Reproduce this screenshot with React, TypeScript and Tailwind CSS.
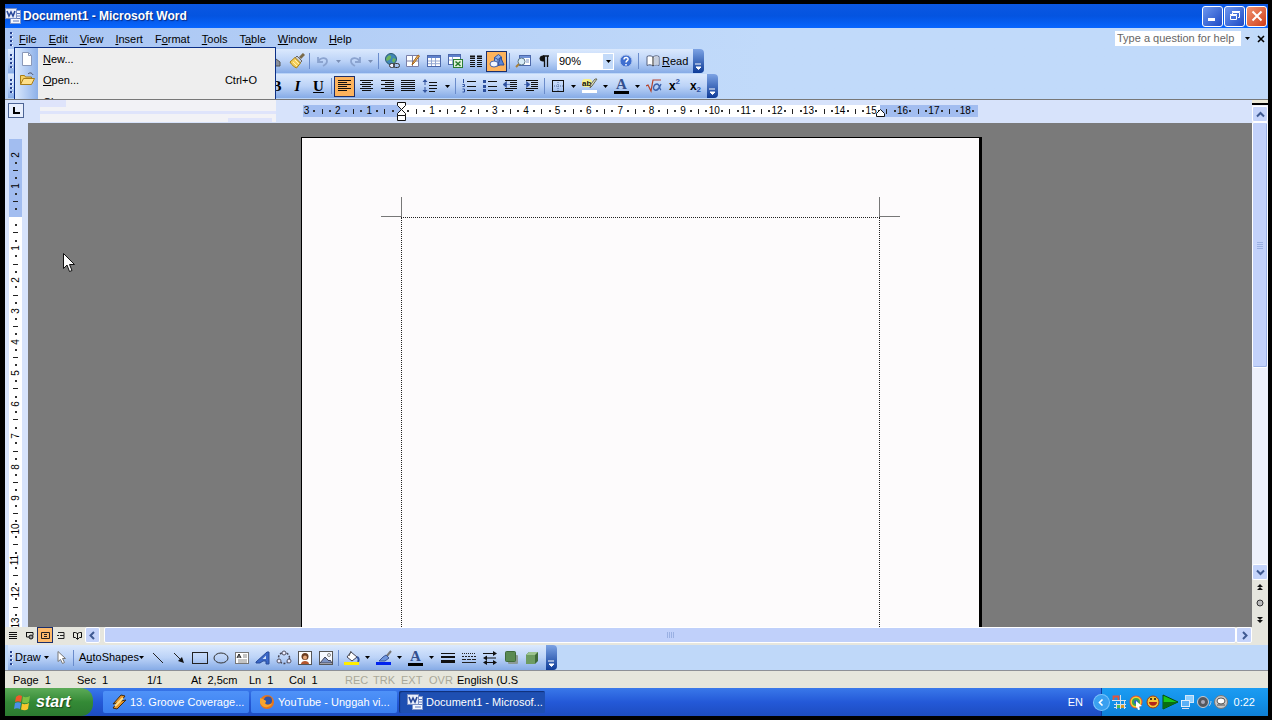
import React from "react";

type Kids = { children?: React.ReactNode };

function Btn({ label, children, active = false, cls = "w-[21px]" }: Kids & { label: string; active?: boolean; cls?: string }) {
  return (
    <button
      type="button"
      aria-label={label}
      className={`${cls} flex h-[21px] shrink-0 items-center justify-center ${active ? "border border-[#1c2f6b] bg-[#fdb35c]" : ""}`}
    >
      {children}
    </button>
  );
}

function Ic({ children }: Kids) {
  return (
    <svg width="16" height="16" viewBox="0 0 16 16" fill="none" aria-hidden="true" className="shrink-0">
      {children}
    </svg>
  );
}

function Caret({ label, dim = false }: { label: string; dim?: boolean }) {
  return (
    <Btn label={label} cls="w-[11px]">
      <svg width="5" height="3" viewBox="0 0 5 3" aria-hidden="true"><path d="M0 0h5L2.500 3z" fill={dim ? "#7b8fb5" : "#000"} /></svg>
    </Btn>
  );
}

function Sep() {
  return <span className="flex w-[5px] shrink-0 justify-center"><span className="h-4 w-px bg-[#6a8ccb]" /></span>;
}

function Grip() {
  return (
    <svg width="4" height="14" viewBox="0 0 4 14" aria-hidden="true" className="shrink-0">
      {[0, 4, 8, 12].map((y) => (
        <g key={y}><rect x="1" y={y + 1} width="2" height="1" fill="#fff" /><rect x="0" y={y} width="2" height="2" fill="#27418f" /></g>
      ))}
    </svg>
  );
}

function Cap() {
  return (
    <button type="button" aria-label="Toolbar Options" className="ml-auto flex w-[11px] shrink-0 items-end justify-center self-stretch rounded-r bg-linear-to-b from-[#7da3e4] to-[#0d3b98] pb-[3px]">
      <svg width="7" height="7" viewBox="0 0 7 7" aria-hidden="true"><path d="M0 1h6M1 4h5L3.500 6.500z" stroke="#fff" fill="#fff" strokeWidth="1" /></svg>
    </button>
  );
}

function Lines({ rows, color = "#111" }: { rows: number[][]; color?: string }) {
  return <>{rows.map(([x, y, w], i) => <rect key={i} x={x} y={y} width={w} height="1" fill={color} />)}</>;
}

const bar = "flex items-center bg-linear-to-b from-[#dbe9fd] via-[#bcd3f7] to-[#86abe6] rounded-r";

function WordIcon() {
  return (
    <Ic>
      <rect x="5.500" y="2.500" width="10" height="13" fill="#f4f7ff" stroke="#8196c9" />
      <path d="M12 5.500h3M12 8h3M12 10.500h3M8 13h6" stroke="#5d77b8" />
      <rect x="0.500" y="0.500" width="11" height="10" fill="#e9eefb" stroke="#7a8fc4" />
      <path d="M2 3l2 5 2-4 2 4 2-5" stroke="#2b4a9a" strokeWidth="1.600" />
    </Ic>
  );
}

function TitleBar() {
  const box = "flex h-[21px] w-[21px] items-center justify-center rounded-[3px] border border-white";
  return (
    <header className="flex h-6 shrink-0 items-center bg-linear-to-b from-[#0b57e2] via-[#0454e0] to-[#0866ff] pr-px">
      <WordIcon />
      <h1 className="ml-[2px] flex-1 text-[12px] leading-4 font-bold text-white [text-shadow:1px_1px_1px_#0a2a80]">Document1 - Microsoft Word</h1>
      <div className="flex gap-px">
        <button type="button" aria-label="Minimize" className={`${box} bg-linear-to-br from-[#6d96ef] to-[#1d48c4]`}>
          <Ic><rect x="3" y="10" width="7" height="3" fill="#fff" /></Ic>
        </button>
        <button type="button" aria-label="Restore" className={`${box} bg-linear-to-br from-[#6d96ef] to-[#1d48c4]`}>
          <Ic><path d="M5.500 6V4.500h7v5H11M5 3.500h8" stroke="#fff" /><path d="M3.500 7.500h6v4h-6zM3 6.500h7" stroke="#fff" /></Ic>
        </button>
        <button type="button" aria-label="Close" className={`${box} bg-linear-to-br from-[#f0926f] to-[#cf3b12]`}>
          <Ic><path d="M3.500 3.500l9 9M12.500 3.500l-9 9" stroke="#fff" strokeWidth="2" /></Ic>
        </button>
      </div>
    </header>
  );
}

const menus: [string, string, string][] = [
  ["", "F", "ile"], ["", "E", "dit"], ["", "V", "iew"], ["", "I", "nsert"], ["F", "o", "rmat"],
  ["", "T", "ools"], ["T", "a", "ble"], ["", "W", "indow"], ["", "H", "elp"],
];

function FileMenu() {
  return (
    <div role="menu" className="absolute top-[19px] left-[9px] z-10 w-[262px] text-[11px]">
      <div className="flex h-[52px] overflow-hidden border border-b-0 border-[#0b2f86] bg-[#eeeeee]">
        <div className="flex w-[23px] shrink-0 flex-col items-center gap-1 bg-linear-to-r from-[#dbe9fd] to-[#8db0e8] pt-[3px]">
          <Ic><path d="M3.500 1.500h6l3 3v10h-9z" fill="#fff" stroke="#8a98b8" /><path d="M9.500 1.500v3h3" stroke="#8a98b8" /></Ic>
          <Ic>
            <path d="M1.500 13.500v-9h4l1 1.500h6v2" fill="#f3cf63" stroke="#a97d16" />
            <path d="M1.500 13.500l3-6h11l-3 6z" fill="#ffe08a" stroke="#a97d16" />
            <path d="M9 3c2-2 4-1 5 1" stroke="#445" />
          </Ic>
        </div>
        <div className="flex-1 pr-[18px] pl-[5px]">
          <button type="button" role="menuitem" className="flex h-[21px] w-full items-center"><span><u>N</u>ew...</span></button>
          <button type="button" role="menuitem" className="flex h-[21px] w-full items-center justify-between"><span><u>O</u>pen...</span><span>Ctrl+O</span></button>
          <button type="button" role="menuitem" className="flex h-[21px] w-full items-start pt-[4px]"><span><u>C</u>lose</span></button>
        </div>
      </div>
      <div className="ml-[26px] h-[23px] border-t border-[#777] bg-[#f2f2f6]">
        <div className="h-[7px] w-[26px] bg-[#dfe4fb]" />
        <div className="mt-1 h-[3px] bg-[#dfe4fb]" />
        <div className="mt-1 mr-1 ml-auto h-1 w-11 bg-[#dfe4fb]" />
      </div>
    </div>
  );
}

function MenuBar() {
  return (
    <nav className="relative flex h-[21px] shrink-0 items-center bg-[#bcd6f8] bg-linear-to-r from-[#a9c5f3] to-[#c1dafa] to-60% pl-[5px] text-[11px] leading-4">
      <Grip />
      <div className="ml-[5px] flex gap-3">
        {menus.map(([a, b, c]) => (
          <button type="button" key={a + b + c}>{a}<u>{b}</u>{c}</button>
        ))}
      </div>
      <div className="ml-auto flex h-[15px] w-[138px] items-center bg-white">
        <input aria-label="Type a question for help" placeholder="Type a question for help" className="w-[126px] min-w-0 pl-[2px] text-[11px] leading-[15px] placeholder:text-[#666]" />
        <button type="button" aria-label="Show questions" className="flex h-[15px] w-3 items-center justify-center bg-[#c3daf9]">
          <svg width="5" height="3" viewBox="0 0 5 3"><path d="M0 0h5L2.500 3z" fill="#000" /></svg>
        </button>
      </div>
      <button type="button" aria-label="Close document" className="mr-px ml-[2px] flex w-3 justify-center">
        <svg width="8" height="8" viewBox="0 0 8 8"><path d="M1 1l6 6M7 1L1 7" stroke="#000" strokeWidth="1.600" /></svg>
      </button>
      <FileMenu />
    </nav>
  );
}

function StandardBar() {
  return (
    <div role="toolbar" aria-label="Standard" className={`${bar} ml-[3px] h-6 w-[696px]`}>
      <div className="w-[257px] shrink-0 pl-[2px]"><Grip /></div>
      <Btn label="Research"><Ic><path d="M4 13V9l4-3 4 3v4z" fill="#8a8f9a" stroke="#555" /></Ic></Btn>
      <Btn label="Format Painter">
        <Ic><path d="M15 1l-4 4" stroke="#7a6a4a" strokeWidth="3" /><path d="M8 3l5 5-2 2-5-5z" fill="#c9ccd6" stroke="#666" /><path d="M6 4.500l5.500 5.500-4 5c-2-1-5-3-6.500-6z" fill="#f5cf5c" stroke="#a88118" /><path d="M4 9l4 4M6 7l4 4" stroke="#fff0b0" /></Ic>
      </Btn>
      <Sep />
      <Btn label="Undo"><Ic><path d="M3 4v5h5M3 9c2-5 9-5 9-1 0 2-2 4-4 5" stroke="#8ba3cf" strokeWidth="1.800" /></Ic></Btn>
      <Caret label="Undo list" dim />
      <Btn label="Redo"><Ic><path d="M13 4v5H8M13 9C11 4 4 4 4 8c0 2 2 4 4 5" stroke="#8ba3cf" strokeWidth="1.800" /></Ic></Btn>
      <Caret label="Redo list" dim />
      <Sep />
      <Btn label="Insert Hyperlink">
        <Ic><circle cx="7" cy="6" r="5.500" fill="#3f86b5" stroke="#2b5a70" /><path d="M4 3c2-2 4 0 3 2S4 7 3 8C1 6 3 4 4 3zM9 5l3 1-2 4-2-2z" fill="#6cb55c" /><rect x="5.500" y="10.500" width="5" height="4" rx="2" fill="#eef" stroke="#333" /><rect x="9.500" y="10.500" width="6" height="4" rx="2" stroke="#333" /></Ic>
      </Btn>
      <Btn label="Tables and Borders">
        <Ic><path d="M1.500 2.500h12v11h-12zM1.500 8h12M7.500 2v12" fill="#fff" stroke="#7a7fa8" /><path d="M14.500 3L9 10l-2 2 1-3 5-7z" fill="#f1c067" stroke="#a3641f" /></Ic>
      </Btn>
      <Btn label="Insert Table">
        <Ic><rect x="1.500" y="2.500" width="13" height="11" fill="#fff" stroke="#4c68aa" /><rect x="2" y="3" width="12" height="2" fill="#5d80cc" /><path d="M2 8h12M2 10.700h12M5.500 5v8M9.500 5v8" stroke="#94a8d2" /></Ic>
      </Btn>
      <Btn label="Insert Excel Worksheet">
        <Ic><rect x="1.500" y="1.500" width="12" height="10" fill="#fff" stroke="#4c68aa" /><rect x="2" y="2" width="11" height="2" fill="#5d80cc" /><path d="M2 7h11M5.500 4v7" stroke="#94a8d2" /><rect x="6.500" y="6.500" width="9" height="8" fill="#e2f3dc" stroke="#2b7d33" /><path d="M8.500 8.500l5 4.500M13.500 8.500l-5 4.500" stroke="#267a2c" strokeWidth="1.500" /></Ic>
      </Btn>
      <Btn label="Columns"><Ic><Lines rows={[3, 5, 7, 9, 11, 13].flatMap((y) => [[2, y, 5], [9, y, 5]])} /><path d="M2 3.500h5M9 3.500h5" stroke="#111" strokeWidth="2" /></Ic></Btn>
      <Btn label="Drawing" active>
        <Ic><path d="M5.500 4.500l4-3 3 2.500v7l-4 2-3-2z" fill="#8fb0ea" stroke="#34559f" /><path d="M11.500 4l3.500 8h-6z" fill="#5c86d6" stroke="#2c4f9e" /><path d="M5.500 4.500l3.500 2 3.500-2.500M9 6.500V13" stroke="#34559f" /><ellipse cx="5" cy="11" rx="4" ry="3" fill="#f2f6ff" stroke="#4a66a8" /></Ic>
      </Btn>
      <Sep />
      <Btn label="Document Map">
        <Ic><rect x="4.500" y="2.500" width="11" height="10" fill="#fff" stroke="#4c68aa" /><rect x="5" y="3" width="10" height="2" fill="#6f92d8" /><path d="M11 7h3M11 9h3" stroke="#7a94c6" /><circle cx="6.500" cy="8.500" r="3.500" fill="#d8ecf6" stroke="#5b7688" /><path d="M4 11L1 14" stroke="#a8803a" strokeWidth="2" /></Ic>
      </Btn>
      <Btn label="Show paragraph marks"><Ic><path d="M8 3H6.500a2.500 2.500 0 0 0 0 5H8z" fill="#111" stroke="#111" /><path d="M13 3H7M8.500 3v11M11.500 3v11" stroke="#111" strokeWidth="1.300" /></Ic></Btn>
      <div className="mr-px ml-[3px] flex h-[17px] w-[57px] shrink-0 items-center bg-white">
        <input aria-label="Zoom" defaultValue="90%" className="w-[46px] min-w-0 pl-[2px] text-[11px] leading-4" />
        <button type="button" aria-label="Zoom list" className="flex h-[15px] w-[10px] items-center justify-center bg-[#c3daf9]">
          <svg width="5" height="3" viewBox="0 0 5 3"><path d="M0 0h5L2.500 3z" fill="#000" /></svg>
        </button>
      </div>
      <Btn label="Help">
        <Ic><circle cx="8" cy="8" r="6" fill="#3f6fd0" stroke="#a9c1ec" /><path d="M6 6.500c0-3 4.500-2.500 4 0-.3 1.200-2 1.300-2 3M8 11v1.500" stroke="#fff" strokeWidth="1.500" /></Ic>
      </Btn>
      <Sep />
      <button type="button" className="flex h-[21px] w-[48px] shrink-0 items-center gap-px pl-1 text-[11px]">
        <Ic><path d="M2 3.500c2-1 4-1 6 .5 2-1.500 4-1.500 6-.5v9c-2-1-4-1-6 .5-2-1.500-4-1.500-6-.5z" fill="#fff" stroke="#55617f" /><path d="M8 4v9" stroke="#222" /><path d="M9 4.500c2-1 3-1 4.500-.5v8c-2-.5-3-.5-4.500.5z" fill="#c5cede" /></Ic>
        <span><u>R</u>ead</span>
      </button>
      <Cap />
    </div>
  );
}

function FormattingBar() {
  const glyph = "font-['Liberation_Serif',serif] text-[15px] leading-4 font-bold";
  return (
    <div role="toolbar" aria-label="Formatting" className={`${bar} mt-px ml-[3px] h-6 w-[710px]`}>
      <div className="w-[258px] shrink-0 pl-[2px]"><Grip /></div>
      <Btn label="Bold"><span className={glyph}>B</span></Btn>
      <Btn label="Italic"><span className={`${glyph} italic`}>I</span></Btn>
      <Btn label="Underline"><span className={`${glyph} underline`}>U</span></Btn>
      <Sep />
      <Btn label="Align Left" active><Ic><Lines rows={[[1, 2, 13], [1, 4, 9], [1, 6, 13], [1, 8, 9], [1, 10, 13], [1, 12, 9]]} /></Ic></Btn>
      <Btn label="Center"><Ic><Lines rows={[[2, 2, 13], [4, 4, 9], [2, 6, 13], [4, 8, 9], [2, 10, 13], [4, 12, 9]]} /></Ic></Btn>
      <Btn label="Align Right"><Ic><Lines rows={[[2, 2, 13], [6, 4, 9], [2, 6, 13], [6, 8, 9], [2, 10, 13], [6, 12, 9]]} /></Ic></Btn>
      <Btn label="Justify"><Ic><Lines rows={[[1, 2, 14], [1, 4, 14], [1, 6, 14], [1, 8, 14], [1, 10, 14], [1, 12, 14]]} /></Ic></Btn>
      <Btn label="Line Spacing" cls="w-6"><Ic><path d="M3 1l2.500 3h-5zM3 15l2.500-3h-5z" fill="#34559f" /><path d="M3 4v3M3 9v3" stroke="#34559f" /><Lines rows={[[7, 4, 8], [7, 7, 8], [7, 10, 8], [7, 13, 6]]} /></Ic></Btn>
      <Caret label="Line spacing list" />
      <Sep />
      <Btn label="Numbering"><Ic><path d="M2.500 1v4M1.500 6.500h2v2h-2M1.500 11h2v3h-2" stroke="#2c4f9e" /><Lines rows={[[6, 3, 9], [6, 8, 9], [6, 12, 9]]} /></Ic></Btn>
      <Btn label="Bullets"><Ic><rect x="1" y="2" width="3" height="3" fill="#2c4f9e" /><rect x="1" y="7" width="3" height="3" fill="#2c4f9e" /><rect x="1" y="11" width="3" height="3" fill="#2c4f9e" /><Lines rows={[[6, 3, 9], [6, 8, 9], [6, 12, 9]]} /></Ic></Btn>
      <Btn label="Decrease Indent"><Ic><Lines rows={[[2, 2, 12], [7, 4, 7], [7, 6, 7], [7, 8, 7], [2, 10, 12], [2, 12, 8]]} /><path d="M7 6.500H3M0 6.500L3.500 3.500v6z" stroke="#2c4f9e" fill="#2c4f9e" strokeWidth="0.600" /></Ic></Btn>
      <Btn label="Increase Indent"><Ic><Lines rows={[[2, 2, 12], [7, 4, 7], [7, 6, 7], [7, 8, 7], [2, 10, 12], [2, 12, 8]]} /><path d="M0 6.500h3M6 6.500L2.500 3.500v6z" stroke="#2c4f9e" fill="#2c4f9e" strokeWidth="0.600" /></Ic></Btn>
      <Sep />
      <Btn label="Outside Border"><Ic><rect x="2.500" y="2.500" width="11" height="11" stroke="#111" /><path d="M8 4v9M4 8h9" stroke="#56709f" strokeDasharray="1 1" /></Ic></Btn>
      <Caret label="Border list" />
      <Btn label="Highlight">
        <Ic><rect x="0" y="1" width="10" height="8" rx="3" fill="#f6f08a" /><text x="0" y="8" fontSize="8" fontWeight="bold" fill="#111">ab</text><path d="M15 1l-5 7-2 2 1-4 4-5z" fill="#dfe0c0" stroke="#6a6a55" /><rect x="0" y="12" width="15" height="3" fill="#fff" /></Ic>
      </Btn>
      <Caret label="Highlight list" />
      <Btn label="Font Color">
        <span className="flex w-[15px] flex-col items-center font-['Liberation_Serif',serif] text-[15px] leading-[13px] font-bold text-[#33508e]">A<span className="h-[3px] w-[15px] bg-black" /></span>
      </Btn>
      <Caret label="Font color list" />
      <Btn label="Equation"><Ic><path d="M0 8l2-1 3 6 2-11h8" stroke="#b5432c" strokeWidth="1.200" /><path d="M15 6c-2 4-3 7-6 6s-1-6 2-6 2 5 4 6" stroke="#3b62ac" strokeWidth="1.400" /></Ic></Btn>
      <Btn label="Superscript"><span className="flex items-start text-[12px] leading-4 font-bold">x<span className="text-[8px] leading-[8px] text-[#2c4f9e]">2</span></span></Btn>
      <Btn label="Subscript"><span className="flex items-end text-[12px] leading-4 font-bold">x<span className="text-[8px] leading-[8px] text-[#2c4f9e]">2</span></span></Btn>
      <Cap />
    </div>
  );
}

/* Four marks per centimetre: the number, then dot, tick, dot. */
function marks(from: number, count: number) {
  return Array.from({ length: count }, (_, i) => {
    const q = from * 4 + i;
    if (q === 0) return "";
    if (q % 4 === 0) return String(Math.abs(q / 4));
    return q % 2 === 0 ? "|" : "·";
  });
}

function Mark({ m, vertical = false }: { m: string; vertical?: boolean }) {
  const turn = vertical ? "-rotate-90" : "";
  return (
    <li className="flex min-h-0 min-w-0 flex-1 items-center justify-center">
      {m === "|" ? <span className={vertical ? "h-px w-[5px] bg-[#222]" : "h-[5px] w-px bg-[#222]"} />
        : m === "·" ? <span className="h-[2px] w-[2px] bg-[#333]" />
        : <span className={`${turn} leading-[10px] whitespace-nowrap`}>{m}</span>}
    </li>
  );
}

function HRuler() {
  return (
    <div className="flex h-[23px] shrink-0 items-start bg-[#d7e3fb]">
      <button type="button" aria-label="Tab type" className="mt-[3px] ml-[3px] flex h-[15px] w-4 items-center justify-center border border-[#4c6495] bg-[#e8effd]">
        <svg width="7" height="7" viewBox="0 0 7 7"><path d="M1 0v6h6" stroke="#000" strokeWidth="2" fill="none" /></svg>
      </button>
      <div className="flex flex-1 justify-center pt-[5px] pl-1">
        <div className="relative">
          <ol className="flex h-3 w-[675px] bg-[linear-gradient(to_right,#a2bdf0_99px,#fff_99px,#fff_577px,#a2bdf0_577px)] text-[10px] text-black">
            {marks(-3, 86).map((m, i) => <Mark key={i} m={m} />)}
          </ol>
          <svg width="9" height="20" viewBox="0 0 9 20" className="absolute top-[-3px] left-[94px]" aria-hidden="true">
            <path d="M0.500 0.500h8v3l-4 4-4-4zM4.500 7.500l4 4v2h-8v-2z" fill="#fff" stroke="#111" /><path d="M0.500 13.500h8v5h-8z" fill="#fff" stroke="#111" />
          </svg>
          <svg width="9" height="8" viewBox="0 0 9 8" className="absolute top-[4px] left-[573px]" aria-hidden="true">
            <path d="M4.500 0.500l4 4v3h-8v-3z" fill="#fff" stroke="#111" />
          </svg>
        </div>
      </div>
    </div>
  );
}

function VRuler() {
  return (
    <div className="flex w-[23px] shrink-0 flex-col bg-[#d7e3fb] pt-4 pl-1">
      <ol className="flex w-[13px] flex-1 flex-col overflow-hidden bg-[linear-gradient(to_bottom,#a2bdf0_78px,#fff_78px)] pt-3 text-[10px] text-black">
        {marks(-2, 61).map((m, i) => <Mark key={i} m={m} vertical />)}
      </ol>
    </div>
  );
}

function Page() {
  return (
    <main className="flex min-w-0 flex-1 justify-center overflow-hidden bg-[#7a7a7a] pt-[14px] pl-[3px]">
      <div className="flex w-[681px] flex-col border-t border-r-[3px] border-l border-black bg-[#fdfbfc]">
        <div className="flex h-[79px] items-end justify-between px-[79px]">
          <div className="h-5 w-[21px] border-r border-b border-[#777]" />
          <div className="h-5 w-[21px] border-b border-l border-[#777]" />
        </div>
        <div className="mx-[99px] flex-1 border border-b-0 border-dotted border-[#222]" contentEditable suppressContentEditableWarning aria-label="Document text" role="textbox" />
      </div>
    </main>
  );
}

function Arrow({ d, label, cls }: { d: string; label: string; cls: string }) {
  return (
    <button type="button" aria-label={label} className={`${cls} flex shrink-0 items-center justify-center rounded-[2px] border border-white bg-[#c5d4fb]`}>
      <svg width="9" height="9" viewBox="0 0 9 9"><path d={d} stroke="#3f5a92" strokeWidth="2" fill="none" /></svg>
    </button>
  );
}

function VScroll() {
  return (
    <div className="flex w-4 shrink-0 flex-col bg-[#eef1fb]">
      <div className="mb-px h-[5px] shrink-0 border-b-2 border-black bg-[#ece9d8]" />
      <Arrow label="Scroll up" cls="h-4 w-4" d="M1 6.500L4.500 3 8 6.500" />
      <div className="flex flex-1 flex-col">
        <div className="flex h-[246px] items-center justify-center rounded-[2px] border border-white bg-[#c3d2fb] shadow-[inset_-1px_-1px_0_#9cb2e6]">
          <svg width="6" height="7" viewBox="0 0 6 7"><path d="M0 .5h6M0 2.500h6M0 4.500h6M0 6.500h6" stroke="#9ab0e2" /></svg>
        </div>
      </div>
      <Arrow label="Scroll down" cls="h-4 w-4" d="M1 2.500L4.500 6 8 2.500" />
      <div className="flex h-[47px] shrink-0 flex-col items-center justify-around bg-[#e6e6de]">
        <button type="button" aria-label="Previous Page"><svg width="6" height="7" viewBox="0 0 6 7"><path d="M3 0l3 3H0zM3 3l3 3H0z" fill="#111" /></svg></button>
        <button type="button" aria-label="Select Browse Object"><svg width="8" height="8" viewBox="0 0 8 8"><circle cx="4" cy="4" r="3" fill="#bbb" stroke="#333" /></svg></button>
        <button type="button" aria-label="Next Page"><svg width="6" height="7" viewBox="0 0 6 7"><path d="M0 1h6L3 4zM0 4h6L3 7z" fill="#111" /></svg></button>
      </div>
    </div>
  );
}

function HScroll() {
  const view = "flex h-4 w-4 items-center justify-center";
  return (
    <div className="flex h-[18px] shrink-0 items-start bg-[#e6e6de]">
      <button type="button" aria-label="Normal View" className={view}><svg width="9" height="9"><Lines rows={[[0, 1, 8], [0, 3, 8], [0, 5, 8], [0, 7, 8]]} /></svg></button>
      <button type="button" aria-label="Web Layout View" className={view}><svg width="9" height="9" viewBox="0 0 9 9"><path d="M1 1.500h7v3M1.500 1v5H4" stroke="#111" fill="none" /><circle cx="6" cy="6" r="2" stroke="#111" fill="#999" /></svg></button>
      <button type="button" aria-label="Print Layout View" className={`${view} border border-[#1c2f6b] bg-[#fdbb6c]`}><svg width="9" height="9" viewBox="0 0 9 9"><path d="M.5 1.500h8v6h-8zM3 3.500h3M3 5.500h3" stroke="#222" fill="none" /></svg></button>
      <button type="button" aria-label="Outline View" className={view}><svg width="9" height="9" viewBox="0 0 9 9"><path d="M1 1.500h6v3H3M1 7.500h6v-3M0 4.500h2" stroke="#222" fill="none" /></svg></button>
      <button type="button" aria-label="Reading Layout" className={view}><svg width="9" height="9" viewBox="0 0 9 9"><path d="M.5 1.500h2l2 1 2-1h2v5h-2l-2 2-2-2h-2zM4.500 2v6" stroke="#111" fill="none" /></svg></button>
      <Arrow label="Scroll left" cls="h-4 w-[15px]" d="M6 1L2.500 4.500 6 8" />
      <div className="ml-1 flex h-4 flex-1 items-center justify-center rounded-[2px] border border-white bg-[#c0d0fa]">
        <svg width="7" height="6" viewBox="0 0 7 6"><path d="M.5 0v6M2.500 0v6M4.500 0v6M6.500 0v6" stroke="#9ab0e2" /></svg>
      </div>
      <Arrow label="Scroll right" cls="h-4 w-4" d="M3 1l3.500 3.500L3 8" />
      <span className="w-4" />
    </div>
  );
}

function DrawingBar() {
  return (
    <div className="shrink-0 bg-[#bfd8f9]">
      <div role="toolbar" aria-label="Drawing" className={`${bar} ml-[3px] h-[25px] w-[549px] text-[11px]`}>
        <div className="w-[7px] shrink-0 pl-[2px]"><Grip /></div>
        <button type="button" className="flex w-[35px] shrink-0 items-center justify-between pr-px"><span>D<u>r</u>aw</span><svg width="5" height="3" viewBox="0 0 5 3"><path d="M0 0h5L2.500 3z" /></svg></button>
        <Btn label="Select Objects"><Ic><path d="M5 1.500v10l2.500-2 2 4 2-1-2-4h3z" fill="#fff" stroke="#777" /></Ic></Btn>
        <Sep />
        <button type="button" className="mr-[3px] flex w-[68px] shrink-0 items-center justify-between pl-[3px]"><span>A<u>u</u>toShapes</span><svg width="5" height="3" viewBox="0 0 5 3"><path d="M0 0h5L2.500 3z" /></svg></button>
        <Btn label="Line"><Ic><path d="M3 3l10 10" stroke="#222" /></Ic></Btn>
        <Btn label="Arrow"><Ic><path d="M3 3l8 8" stroke="#222" /><path d="M13 13l-6-2 4-4z" fill="#111" /></Ic></Btn>
        <Btn label="Rectangle"><Ic><rect x="0.500" y="2.500" width="15" height="11" stroke="#222" /></Ic></Btn>
        <Btn label="Oval"><Ic><ellipse cx="8" cy="8" rx="7" ry="5" stroke="#333" /></Ic></Btn>
        <Btn label="Text Box"><Ic><rect x="1.500" y="2.500" width="13" height="11" fill="#fff" stroke="#777" /><path d="M3 8l2-4 2 4M4 7h2" stroke="#111" /><path d="M9 5h4M9 7h4M4 10h9M4 12h9" stroke="#888" /></Ic></Btn>
        <Btn label="WordArt"><Ic><path d="M1 12L12 2h2v12h-3v-3H8l-3 2H1z" fill="#3a67c7" stroke="#274a98" /><path d="M7.500 9l3.500-3.500V9z" fill="#cfe0fb" /></Ic></Btn>
        <Btn label="Diagram"><Ic><circle cx="8" cy="8" r="5.500" stroke="#445" strokeWidth="1.500" strokeDasharray="2 1.500" /><circle cx="8" cy="3" r="2" fill="#eef" stroke="#556" /><circle cx="3" cy="11" r="2" fill="#eef" stroke="#556" /><circle cx="13" cy="11" r="2" fill="#eef" stroke="#556" /></Ic></Btn>
        <Btn label="Clip Art"><Ic><rect x="1.500" y="1.500" width="13" height="13" fill="#fff" stroke="#555" /><circle cx="8" cy="6.500" r="3.500" fill="#6b3d20" /><circle cx="8" cy="7.500" r="2" fill="#e8a97b" /><path d="M4 14c0-4 8-4 8 0z" fill="#b5562e" /></Ic></Btn>
        <Btn label="Picture"><Ic><rect x="1.500" y="1.500" width="13" height="13" fill="#f6f9ff" stroke="#555" /><path d="M2 13l5-6 4 4 1-1 2 3z" fill="#7d94c4" stroke="#445" /><circle cx="11" cy="5" r="1.500" stroke="#888" /></Ic></Btn>
        <Sep />
        <Btn label="Fill Color"><Ic><path d="M7 2l6 5-5 4-5-4z" fill="#fff" stroke="#445" /><path d="M13 7c2 1 2 3 1 5" stroke="#34559f" strokeWidth="2" /><path d="M5 6l2-5" stroke="#555" /><rect x="0" y="12" width="15" height="3" fill="#ffee00" /></Ic></Btn>
        <Caret label="Fill list" />
        <Btn label="Line Color"><Ic><path d="M15 1l-5 6" stroke="#777" strokeWidth="2" /><path d="M10 5l3 3-4 3-6 0 4-4z" fill="#6f95dc" stroke="#3b5797" /><rect x="0" y="12" width="15" height="3" fill="#0022ee" /></Ic></Btn>
        <Caret label="Line color list" />
        <Btn label="Text Color"><span className="flex w-[15px] flex-col items-center font-['Liberation_Serif',serif] text-[15px] leading-[13px] font-bold text-[#33508e]">A<span className="h-[3px] w-[15px] bg-black" /></span></Btn>
        <Caret label="Text color list" />
        <Btn label="Line Style"><Ic><path d="M1 3.500h14" stroke="#111" /><path d="M1 7h14" stroke="#111" strokeWidth="2" /><path d="M1 11.500h14" stroke="#111" strokeWidth="3" /></Ic></Btn>
        <Btn label="Dash Style"><Ic><path d="M1 3.500h14" stroke="#222" strokeDasharray="1 1" /><path d="M1 6.500h14" stroke="#222" strokeDasharray="2 1" /><path d="M1 9.500h14" stroke="#222" strokeDasharray="4 1" /><path d="M1 12.500h14" stroke="#222" /></Ic></Btn>
        <Btn label="Arrow Style"><Ic><path d="M1 3.500h11M3 8h11M3 12.500h10" stroke="#111" /><path d="M15 3.500l-4-2.500v5zM1 8l4-2.500v5zM1 12.500l4-2.500v5zM15 12.500l-4-2.500v5z" fill="#111" /></Ic></Btn>
        <Btn label="Shadow Style"><Ic><rect x="5" y="5" width="10" height="9" rx="1" fill="#8b9a98" /><rect x="2.500" y="1.500" width="10" height="10" rx="1" fill="#5a8a52" stroke="#3f6b3a" /></Ic></Btn>
        <Btn label="3-D Style"><Ic><path d="M2 5l3-3h9v9l-3 3H2z" fill="#3f6b3a" /><path d="M2 5l3-3h9l-3 3z" fill="#9cc48f" /><rect x="2" y="5" width="9" height="9" fill="#6d9c62" /></Ic></Btn>
        <Cap />
      </div>
    </div>
  );
}

function StatusBar() {
  const off = "w-7 shrink-0 text-[#a9a899]";
  return (
    <footer className="flex h-[18px] shrink-0 items-center border-t border-[#8d9096] bg-[#e6e6dc] pl-2 text-[11px] leading-4 whitespace-nowrap">
      <span className="w-16 shrink-0">Page&nbsp; 1</span>
      <span className="w-[70px] shrink-0">Sec&nbsp; 1</span>
      <span className="w-11 shrink-0">1/1</span>
      <span className="w-[58px] shrink-0">At&nbsp; 2,5cm</span>
      <span className="w-10 shrink-0">Ln&nbsp; 1</span>
      <span className="w-14 shrink-0">Col&nbsp; 1</span>
      <span className={off}>REC</span>
      <span className={off}>TRK</span>
      <span className={off}>EXT</span>
      <span className={off}>OVR</span>
      <span className="shrink-0">English (U.S</span>
    </footer>
  );
}

function Task({ label, active = false, children }: Kids & { label: string; active?: boolean }) {
  return (
    <button type="button" className={`flex h-[22px] w-[146px] items-center gap-[3px] rounded-[2px] pl-2 text-[11px] whitespace-nowrap text-white ${active ? "bg-[#1e4fb2] shadow-[inset_1px_1px_1px_#0f2f78]" : "bg-linear-to-b from-[#4f92f8] to-[#3a7ff0]"}`}>
      {children}<span>{label}</span>
    </button>
  );
}

function TaskBar() {
  return (
    <div className="flex h-7 shrink-0 items-center bg-linear-to-b from-[#3a78ea] via-[#2459d8] to-[#1d4cc0]">
      <button type="button" className="flex h-7 w-[88px] shrink-0 items-center gap-1 rounded-r-xl bg-linear-to-b from-[#5cab58] via-[#348a36] to-[#2c7a30] pl-[9px] text-[16px] leading-6 font-bold text-white italic [text-shadow:1px_1px_1px_#1a4a1c]">
        <svg width="18" height="18" viewBox="0 0 18 18" aria-hidden="true">
          <path d="M2 4c2-2 4-2 6-1L7 9C5 8 3 8 1 9z" fill="#f0592a" />
          <path d="M9 3.500c2 1 4 1 7-.5l-1 6c-2 1.500-4 1.500-7 .5z" fill="#7cc142" />
          <path d="M1 10c2-1 4-1 6 0l-1 6c-2-1-4-1-6 0z" fill="#4a90e8" />
          <path d="M8 10.500c2 1 4 1 7-.5l-1 6c-2 1.500-4 1.500-7 .5z" fill="#f9c62c" />
        </svg>
        <span>start</span>
      </button>
      <div className="ml-[10px] flex gap-[2px]">
        <Task label="13. Groove Coverage...">
          <Ic><path d="M2 10L10 1l4 1-4 5 5-1-9 9-4-1 4-5z" fill="#e8962a" stroke="#3b2a14" /><path d="M4 12l8-8" stroke="#ffe08a" strokeWidth="2" /></Ic>
        </Task>
        <Task label="YouTube - Unggah vi...">
          <Ic><circle cx="8" cy="8" r="7" fill="#e8761c" /><circle cx="9" cy="6.500" r="4" fill="#2f55a8" /><path d="M1 4c1 1 3 0 4 2 2 0 3 2 1 3 1 3 5 2 7 0-1 5-9 6-12 0z" fill="#f7a52d" /></Ic>
        </Task>
        <Task label="Document1 - Microsof..." active><WordIcon /></Task>
      </div>
      <div className="ml-auto flex h-7 items-center text-[11px] text-white">
        <span className="pr-[18px]">EN</span>
        <div className="flex h-7 w-[167px] items-center border-l border-[#0f3fa0] bg-linear-to-b from-[#1c9cf2] via-[#1290e8] to-[#0f7fd4]">
          <button type="button" aria-label="Show hidden icons" className="-ml-2 flex h-[15px] w-[15px] items-center justify-center rounded-full bg-[#3aa0f0] ring-1 ring-[#7cc4fa]">
            <svg width="7" height="7" viewBox="0 0 7 7"><path d="M4.500 .5l-3 3 3 3" stroke="#fff" strokeWidth="1.600" fill="none" /></svg>
          </button>
          <div className="ml-[2px] flex gap-[1px]">
            <Ic><path d="M2.500 7V2.500h5V7" stroke="#e6533a" strokeWidth="1.800" /><path d="M1 6.500h14M3 10.500h12M3 13.500h12M5.500 8v7M9.500 1v14M13.500 6v9" stroke="#d8e0ea" /><rect x="10" y="11" width="3" height="3" fill="#d89a2c" /><rect x="6" y="11" width="3" height="3" fill="#4dbb4d" /></Ic>
            <Ic><circle cx="8" cy="8" r="6.500" fill="#e8502f" /><circle cx="8" cy="8" r="5.500" fill="#f4d331" /><circle cx="8" cy="8" r="4" fill="#3ba64c" /><circle cx="8" cy="8" r="2" fill="#2b5fd0" /><path d="M8 7l6 5-3 .5 1 3-2 .5-1-3-1 1z" fill="#fff" /></Ic>
            <Ic><circle cx="8" cy="8" r="6" fill="#f6c535" stroke="#a33b12" /><path d="M4 8h8c0 5-8 5-8 0z" fill="#b3261a" /><path d="M6 4v2M10 4v2" stroke="#111" strokeWidth="1.500" /></Ic>
            <Ic><path d="M1 1l15 7L1 15z" fill="#18c81c" stroke="#064a08" /><path d="M1 8h15L1 15z" fill="#0a6d10" /></Ic>
            <Ic><rect x="6.500" y="1.500" width="8" height="7" fill="#8fd0ff" stroke="#d3e6f8" /><rect x="2.500" y="6.500" width="8" height="6" fill="#5ab0f6" stroke="#e0eefa" /><path d="M3 14.500h7" stroke="#dde" /></Ic>
            <Ic><circle cx="7" cy="8" r="5.500" fill="#55585f" stroke="#c9ccd2" /><circle cx="7" cy="8" r="2" fill="#aab" /><path d="M13 12c1-1 2-3 2-5" stroke="#bcd" /></Ic>
            <Ic><circle cx="8" cy="8" r="6.500" fill="#c8c8c8" stroke="#777" /><ellipse cx="8" cy="7" rx="4" ry="3" fill="#fff" stroke="#555" /><path d="M4 11h8" stroke="#555" /></Ic>
          </div>
          <time className="mr-[13px] ml-auto">0:22</time>
        </div>
      </div>
    </div>
  );
}

export default function App() {
  return (
    <div className="relative flex min-h-screen flex-col bg-black pt-1 pr-1 pb-1 pl-[5px] font-['Liberation_Sans',sans-serif] text-black">
      <TitleBar />
      <MenuBar />
      <div className="h-[50px] shrink-0 bg-linear-to-r from-[#b4cff6] to-[#c1dafa] to-60%">
        <StandardBar />
        <FormattingBar />
      </div>
      <div className="flex flex-1 border-t border-[#777]">
        <div className="flex min-w-0 flex-1 flex-col">
          <HRuler />
          <div className="flex flex-1">
            <VRuler />
            <Page />
          </div>
        </div>
        <VScroll />
      </div>
      <HScroll />
      <DrawingBar />
      <StatusBar />
      <TaskBar />
      <svg width="12" height="20" viewBox="0 0 12 20" className="pointer-events-none absolute top-[253px] left-[63px]" aria-hidden="true">
        <path d="M.5 .5v15l3.500-3.500 2.500 6.500 2.500-1-2.500-6h5z" fill="#fff" stroke="#111" />
      </svg>
    </div>
  );
}
